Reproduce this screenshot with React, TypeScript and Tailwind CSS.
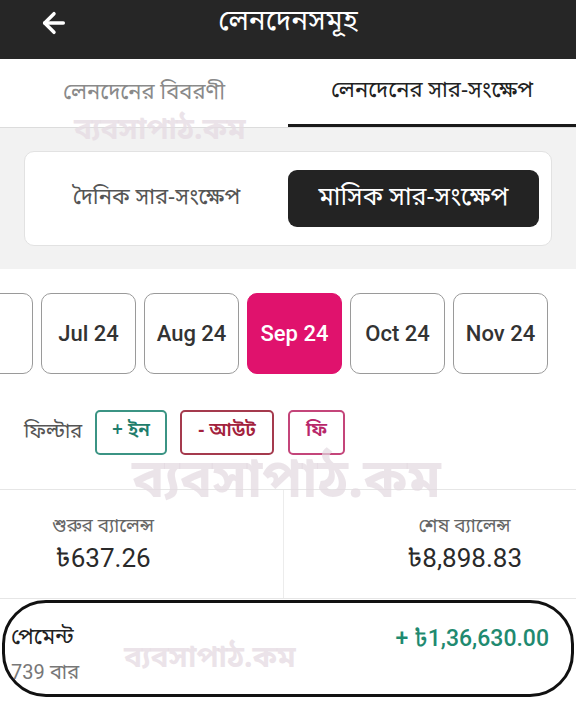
import { ArrowLeft } from 'lucide-react';

const MONTHS = ['', 'Jul 24', 'Aug 24', 'Sep 24', 'Oct 24', 'Nov 24'];
const ACTIVE = 'Sep 24';

const bn = { fontFamily: '"Noto Sans Bengali", "Noto Sans", Roboto, sans-serif' };
const latin = { fontFamily: 'Roboto, "Noto Sans Bengali", sans-serif' };

export default function App() {
  return (
    <div className="relative w-[576px] h-[701px] overflow-hidden bg-white" style={bn}>
      {/* Header */}
      <header className="h-[59px] bg-[#262626] flex items-start pt-[7px] relative">
        <ArrowLeft size={32} strokeWidth={2.6} className="text-white ml-[38px]" />
        <h1 className="absolute left-0 right-0 top-[4px] text-center text-white text-[28px] leading-[38px]">লেনদেনসমূহ</h1>
      </header>

      {/* Tabs */}
      <div className="flex h-[69px] border-b border-[#dcdcdc]">
        <div className="flex-1 flex items-center justify-center text-[22px] text-[#8a8a8a]">লেনদেনের বিবরণী</div>
        <div className="flex-1 flex items-center justify-center text-[22px] text-[#222] border-b-[3px] border-[#1a1a1a]">
          লেনদেনের সার-সংক্ষেপ
        </div>
      </div>

      {/* Daily / monthly switch */}
      <section className="bg-[#f2f2f2] px-[24px] py-[23px]">
        <div className="bg-white border border-[#e2e2e2] rounded-[10px] h-[95px] flex items-center pr-[12px]">
          <div className="flex-1 text-center text-[22px] text-[#555]">দৈনিক সার-সংক্ষেপ</div>
          <div className="w-[251px] h-[57px] rounded-[9px] bg-[#232323] text-white text-[25px] flex items-center justify-center">
            মাসিক সার-সংক্ষেপ
          </div>
        </div>
      </section>

      {/* Month selector */}
      <div className="overflow-hidden pt-[24px]">
        <div className="flex gap-[8px] -ml-[62px]">
          {MONTHS.map((m, i) => (
            <div
              key={i}
              style={latin}
              className={`shrink-0 w-[95px] h-[81px] rounded-[10px] flex items-center justify-center text-[22px] font-medium ${
                m === ACTIVE ? 'bg-[#e0126d] text-white border border-[#e0126d]' : 'border border-[#9a9a9a] text-[#333]'
              }`}
            >
              {m}
            </div>
          ))}
        </div>
      </div>

      {/* Filters */}
      <div className="flex items-center pl-[24px] mt-[36px]">
        <span className="text-[20px] text-[#555] w-[71px]">ফিল্টার</span>
        <span className="w-[72px] h-[45px] border-2 border-[#3b9484] rounded-[5px] text-[#1f7d6c] text-[19px] font-semibold flex items-center justify-center">+ ইন</span>
        <span className="ml-[13px] w-[94px] h-[45px] border-2 border-[#a53a4d] rounded-[5px] text-[#a3223d] text-[19px] font-semibold flex items-center justify-center">- আউট</span>
        <span className="ml-[14px] w-[57px] h-[45px] border-2 border-[#c4457a] rounded-[5px] text-[#b8276a] text-[19px] font-semibold flex items-center justify-center">ফি</span>
      </div>

      {/* Balances */}
      <div className="mt-[34px] border-t border-b border-[#e6e6e6] h-[110px] flex">
        <div className="w-[284px] border-r border-[#ececec] flex flex-col items-start pl-[52px] justify-center">
          <div className="flex flex-col items-center">
            <span className="text-[19px] text-[#666]">শুরুর ব্যালেন্স</span>
            <span style={latin} className="text-[26px] text-[#2a2a2a] leading-[32px]">৳637.26</span>
          </div>
        </div>
        <div className="flex-1 flex flex-col items-end pr-[54px] justify-center">
          <div className="flex flex-col items-center">
            <span className="text-[19px] text-[#666]">শেষ ব্যালেন্স</span>
            <span style={latin} className="text-[26px] text-[#2a2a2a] leading-[32px]">৳8,898.83</span>
          </div>
        </div>
      </div>

      {/* Payment row */}
      <div className="mx-[2px] mt-[1px] h-[97px] border-[3px] border-[#111] rounded-[44px] flex justify-between px-[6px] pt-[21px]">
        <div className="flex flex-col">
          <span className="text-[22px] text-[#222] leading-[30px]">পেমেন্ট</span>
          <span className="text-[20px] text-[#777] leading-[28px] mt-[4px]">
            <span style={latin}>739</span> বার
          </span>
        </div>
        <span style={latin} className="text-[23px] font-medium text-[#1f8a70] mr-[16px] leading-[30px]">+ ৳1,36,630.00</span>
      </div>

      {/* Watermarks */}
      <span className="absolute left-[74px] top-[116px] text-[30px] leading-none font-bold text-[#e6dce3]/80 pointer-events-none">ব্যবসাপাঠ.কম</span>
      <span className="absolute left-[132px] top-[456px] text-[54px] leading-none font-bold text-[#e3d8df]/70 pointer-events-none">ব্যবসাপাঠ.কম</span>
      <span className="absolute left-[124px] top-[644px] text-[30px] leading-none font-bold text-[#e6dce3]/80 pointer-events-none">ব্যবসাপাঠ.কম</span>
    </div>
  );
}
